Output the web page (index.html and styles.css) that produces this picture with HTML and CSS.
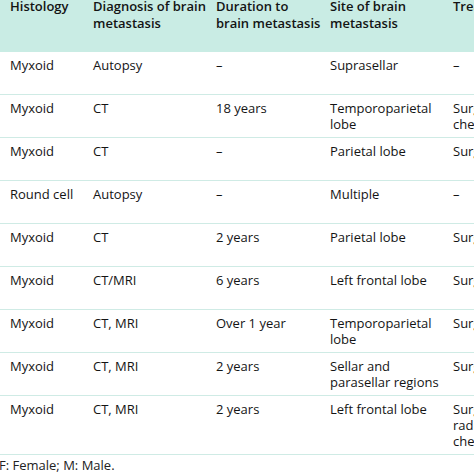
FILE: index.html
```html
<!DOCTYPE html>
<html lang="en">
<head>
<meta charset="utf-8">
<title>Brain metastasis table</title>
<link rel="stylesheet" href="styles.css">
</head>
<body>
<div class="page">
  <table class="meta-table">
    <colgroup>
      <col class="c-hist">
      <col class="c-diag">
      <col class="c-dur">
      <col class="c-site">
      <col class="c-treat">
    </colgroup>
    <thead>
      <tr>
        <th>Histology</th>
        <th>Diagnosis of brain<br>metastasis</th>
        <th>Duration to<br>brain metastasis</th>
        <th>Site of brain<br>metastasis</th>
        <th>Treatment</th>
      </tr>
    </thead>
    <tbody>
      <tr><td>Myxoid</td><td>Autopsy</td><td>–</td><td>Suprasellar</td><td>–</td></tr>
      <tr><td>Myxoid</td><td>CT</td><td>18 years</td><td>Temporoparietal<br>lobe</td><td>Surgery,<br>chemotherapy</td></tr>
      <tr><td>Myxoid</td><td>CT</td><td>–</td><td>Parietal lobe</td><td>Surgery</td></tr>
      <tr><td>Round cell</td><td>Autopsy</td><td>–</td><td>Multiple</td><td>–</td></tr>
      <tr><td>Myxoid</td><td>CT</td><td>2 years</td><td>Parietal lobe</td><td>Surgery</td></tr>
      <tr><td>Myxoid</td><td>CT/MRI</td><td>6 years</td><td>Left frontal lobe</td><td>Surgery</td></tr>
      <tr><td>Myxoid</td><td>CT, MRI</td><td>Over 1 year</td><td>Temporoparietal<br>lobe</td><td>Surgery</td></tr>
      <tr><td>Myxoid</td><td>CT, MRI</td><td>2 years</td><td>Sellar and<br>parasellar regions</td><td>Surgery</td></tr>
      <tr><td>Myxoid</td><td>CT, MRI</td><td>2 years</td><td>Left frontal lobe</td><td>Surgery,<br>radiotherapy,<br>chemotherapy</td></tr>
    </tbody>
  </table>
  <p class="footnote">F: Female; M: Male.</p>
</div>
</body>
</html>
```
FILE: styles.css
```css
html, body {
  margin: 0;
  padding: 0;
  background: #ffffff;
}

body {
  width: 474px;
  height: 474px;
  overflow: hidden;
  font-family: "Open Sans", "Noto Sans", sans-serif;
  color: #141414;
}

.page {
  width: 600px;
  margin-top: -3px;
}

.meta-table {
  table-layout: fixed;
  width: 583px;
  border-collapse: separate;
  border-spacing: 0;
  font-size: 13px;
}

.c-hist { width: 83px; }
.c-diag { width: 123px; }
.c-dur { width: 114px; }
.c-site { width: 123px; }
.c-treat { width: 140px; }

.meta-table th {
  box-sizing: border-box;
  height: 55px;
  padding: 1px 4px 0 10px;
  background: #c9ece4;
  font-weight: 600;
  line-height: 17px;
  text-align: left;
  vertical-align: top;
  white-space: nowrap;
}

.meta-table td {
  box-sizing: border-box;
  height: 43px;
  padding: 5px 4px 5px 10px;
  line-height: 16px;
  vertical-align: top;
  white-space: nowrap;
  border-bottom: 1px solid #cfebe5;
}

.footnote {
  margin: 2px 0 0 -1px;
  font-size: 13px;
  line-height: 16px;
  color: #222222;
}
```
